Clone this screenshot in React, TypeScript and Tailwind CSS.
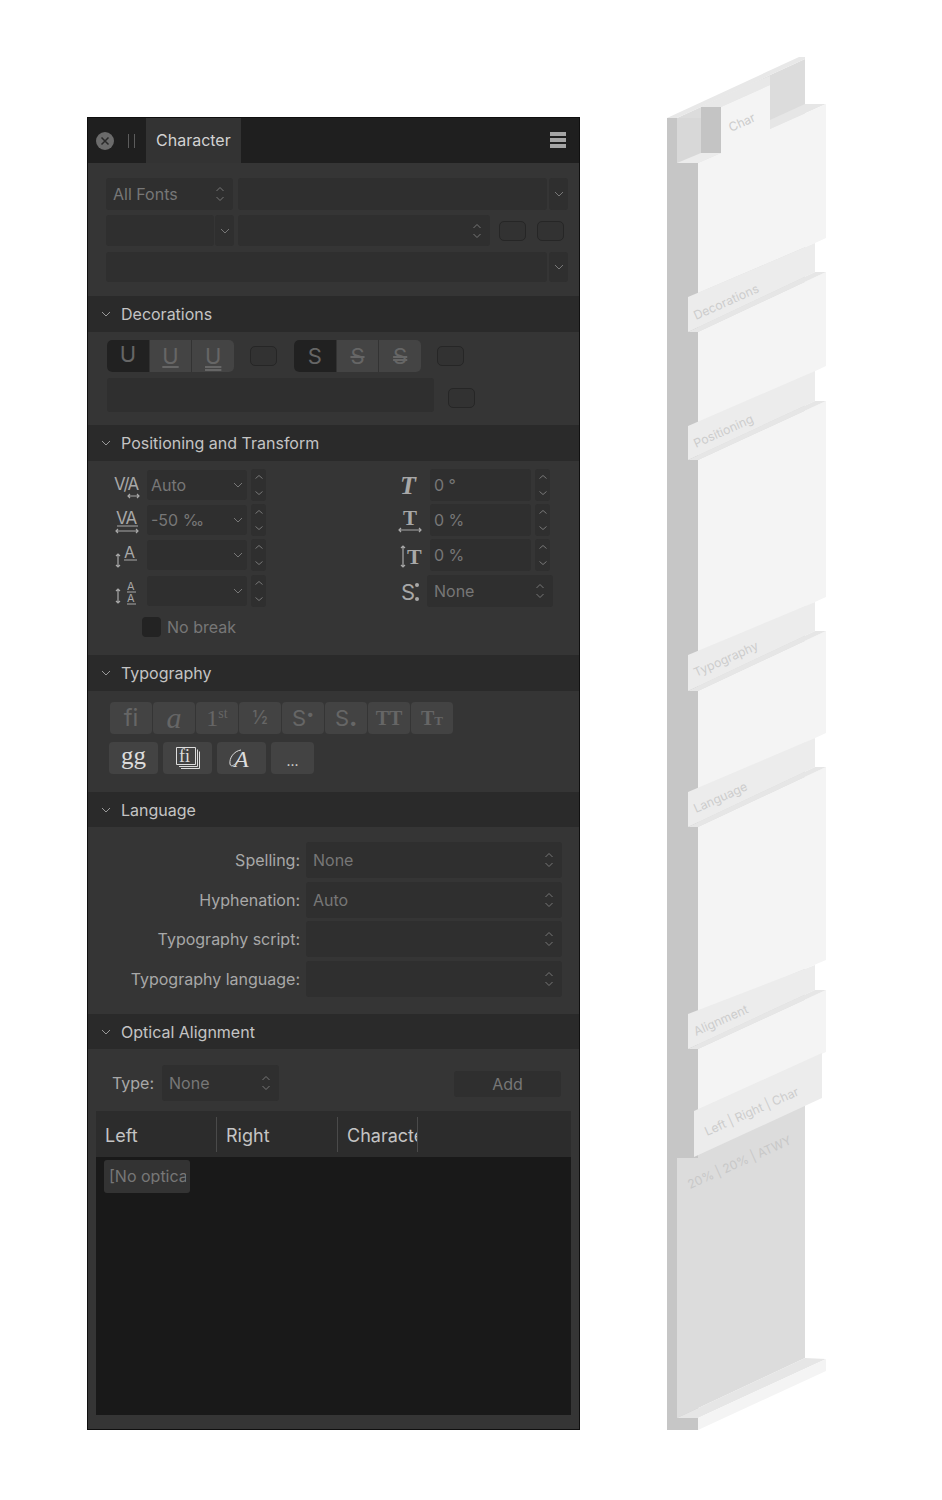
import type { ReactNode } from "react";

const Chevron = ({ className = "" }: { className?: string }) => (
  <svg viewBox="0 0 10 6" aria-hidden="true" className={`h-[6px] w-[10px] ${className}`}>
    <path d="M1 1l4 4 4-4" fill="none" stroke="currentColor" strokeWidth="1" />
  </svg>
);

const UpDown = () => (
  <svg viewBox="0 0 10 16" aria-hidden="true" className="h-[16px] w-[10px] text-[#777]">
    <path d="M1.5 5L5 1.5 8.5 5M1.5 11L5 14.5 8.5 11" fill="none" stroke="currentColor" strokeWidth="1" />
  </svg>
);

const Field = ({ className = "", children }: { className?: string; children?: ReactNode }) => (
  <div className={`flex items-center rounded-[3px] bg-[#2f2f2f] text-[#777] ${className}`}>{children}</div>
);

const Check = ({ className = "" }: { className?: string }) => (
  <div className={`h-[20px] w-[27px] rounded-[5px] border border-[#262626] bg-[#323232] ${className}`} />
);

const Select = ({ className = "", label }: { className?: string; label?: string }) => (
  <Field className={`justify-between pl-[7px] pr-[8px] ${className}`}>
    <span>{label}</span>
    <UpDown />
  </Field>
);

const ChevBox = ({ className = "" }: { className?: string }) => (
  <Field className={`justify-center ${className}`}>
    <Chevron className="text-[#777]" />
  </Field>
);

const Stepper = () => (
  <Field className="ml-[4px] h-[32px] w-[15px] justify-center">
    <svg viewBox="0 0 10 22" aria-hidden="true" className="h-[22px] w-[10px] text-[#777]">
      <path d="M1.500 4.500L5 1.500l3.500 3M1.500 17.500L5 20.500l3.500-3" fill="none" stroke="currentColor" strokeWidth="1" />
    </svg>
  </Field>
);

const Header = ({ title, className = "h-[36px]" }: { title: string; className?: string }) => (
  <div className={`flex items-center bg-[#2a2a2a] text-[#c4c4c4] ${className}`}>
    <Chevron className="ml-[13px] mr-[10px] text-[#999]" />
    <span>{title}</span>
  </div>
);

const NumRow = ({ icon, value }: { icon: ReactNode; value?: string }) => (
  <div className="flex h-[31px] items-center">
    <div className="w-[35px]">{icon}</div>
    <Field className="h-[30px] w-[100px]">
      <span className="w-[81px] pl-[4px]">{value}</span>
      <Chevron className="ml-[5px] text-[#777]" />
    </Field>
    <Stepper />
  </div>
);

const RightRow = ({ icon, value }: { icon: ReactNode; value: string }) => (
  <div className="flex h-[31px] items-center">
    <div className="w-[32px]">{icon}</div>
    <Field className="h-[32px] w-[101px] pl-[4px]">{value}</Field>
    <Stepper />
  </div>
);

const Glyph = ({ children }: { children: ReactNode }) => (
  <svg viewBox="0 0 30 32" aria-hidden="true" className="h-[32px] w-[30px] text-[#a8a8a8]">
    {children}
  </svg>
);

const Arrow = ({ d }: { d: string }) => <path d={d} fill="none" stroke="currentColor" strokeWidth="1.2" />;

const TypoBtn = ({ children }: { children: ReactNode }) => (
  <div className="flex h-[32px] w-[42px] items-center justify-center rounded-[4px] bg-[#434343] text-[#666]">
    {children}
  </div>
);

const LangRow = ({ label, value }: { label: string; value?: string }) => (
  <div className="flex h-[36px] items-center">
    <span className="w-[212px] text-right text-[#a8a8a8]">{label}</span>
    <Select className="ml-[6px] h-[36px] w-[256px]" label={value} />
  </div>
);

const Panel = () => (
  <div className="mt-[67px] h-[1313px] w-[493px] shrink-0 border border-[#0f0f0f] bg-[#353535] text-[16px] leading-none">
    <div className="flex h-[45px] items-stretch bg-[#1f1f1f]">
      <div className="ml-[8px] flex h-full items-center">
        <svg viewBox="0 0 18 18" aria-hidden="true" className="h-[18px] w-[18px]">
          <circle cx="9" cy="9" r="9" fill="#6b6b6b" />
          <path d="M5.500 5.500l7 7M12.500 5.500l-7 7" stroke="#2a2a2a" strokeWidth="1.500" />
        </svg>
        <div className="ml-[14px] h-[14px] w-[7px] border-x border-[#5c5c5c]" />
      </div>
      <div className="ml-[11px] flex w-[95px] items-center bg-[#333] pb-[2px] pl-[10px] text-[#d2d2d2]">Character</div>
      <div className="ml-auto mr-[13px] flex flex-col justify-center gap-[2px] pb-[2px]">
        <div className="h-[4px] w-[16px] bg-[#a5a5a5]" />
        <div className="h-[4px] w-[16px] bg-[#a5a5a5]" />
        <div className="h-[4px] w-[16px] bg-[#a5a5a5]" />
      </div>
    </div>

    <div className="h-[133px] pl-[18px] pt-[15px]">
      <div className="flex h-[32px] gap-[2px]">
        <Select className="mr-[3px] w-[127px]" label="All Fonts" />
        <Field className="w-[309px]" />
        <ChevBox className="w-[19px]" />
      </div>
      <div className="mt-[5px] flex h-[31px] items-center">
        <Field className="h-full w-[108px]" />
        <ChevBox className="ml-[1px] h-full w-[19px]" />
        <Select className="ml-[4px] h-full w-[252px]" />
        <Check className="ml-[9px]" />
        <Check className="ml-[11px]" />
      </div>
      <div className="mt-[6px] flex h-[30px] gap-[2px]">
        <Field className="w-[441px]" />
        <ChevBox className="w-[19px]" />
      </div>
    </div>

    <Header title="Decorations" />
    <div className="h-[93px] pl-[19px] pt-[8px]">
      <div className="flex h-[32px] items-center">
        <div className="flex h-full w-[127px] overflow-hidden rounded-[5px] bg-[#444] text-[22px] text-[#666]">
          <div className="flex flex-1 items-center justify-center bg-[#212121] pb-[5px]">U</div>
          <div className="flex flex-1 items-center justify-center border-x border-[#333] underline underline-offset-2">U</div>
          <div className="flex flex-1 items-center justify-center underline decoration-double underline-offset-2">U</div>
        </div>
        <Check className="ml-[16px]" />
        <div className="ml-[17px] flex h-full w-[127px] overflow-hidden rounded-[5px] bg-[#444] text-[22px] text-[#666]">
          <div className="flex flex-1 items-center justify-center bg-[#212121]">S</div>
          <div className="flex flex-1 items-center justify-center border-x border-[#333] line-through">S</div>
          <div className="flex flex-1 items-center justify-center line-through decoration-double">S</div>
        </div>
        <Check className="ml-[16px]" />
      </div>
      <div className="mt-[6px] flex h-[34px] items-center">
        <Field className="h-full w-[327px]" />
        <Check className="ml-[14px] mt-[6px]" />
      </div>
    </div>

    <Header title="Positioning and Transform" />
    <div className="flex h-[194px] pt-[8px]">
      <div className="ml-[24px] w-[286px]">
        <div className="flex flex-col gap-[4px]">
          <NumRow
            value="Auto"
            icon={
              <Glyph>
                <text x="2" y="21" fontSize="17" letterSpacing="-1.500" fill="currentColor">V/A</text>
                <Arrow d="M16 27h11M18 25l-2 2 2 2M25 25l2 2-2 2" />
              </Glyph>
            }
          />
          <NumRow
            value="-50 ‰"
            icon={
              <Glyph>
                <text x="4" y="20" fontSize="17" letterSpacing="-1" fill="currentColor">VA</text>
                <Arrow d="M5 22h21M4 27h22M6 25l-2 2 2 2M24 25l2 2-2 2" />
              </Glyph>
            }
          />
          <NumRow
            icon={
              <Glyph>
                <text x="12" y="19" fontSize="16" fill="currentColor">A</text>
                <Arrow d="M12 21h13M6 15v13M4 17l2-2 2 2M4 26l2 2 2-2" />
              </Glyph>
            }
          />
          <div className="mt-[1px]">
            <NumRow
              icon={
                <Glyph>
                  <text x="15" y="15" fontSize="11" fill="currentColor">A</text>
                  <text x="15" y="27" fontSize="11" fill="currentColor">A</text>
                  <Arrow d="M15 17h9M15 29h9M6 14v14M4 16l2-2 2 2M4 26l2 2 2-2" />
                </Glyph>
              }
            />
          </div>
        </div>
        <div className="ml-[30px] mt-[11px] flex h-[20px] items-center">
          <div className="h-[20px] w-[19px] rounded-[4px] bg-[#232323]" />
          <span className="ml-[6px] text-[#777]">No break</span>
        </div>
      </div>

      <div className="flex flex-col gap-[4px]">
        <RightRow
          value="0 °"
          icon={
            <Glyph>
              <text x="2" y="25" fontSize="26" fontStyle="italic" fontWeight="700" fontFamily="Liberation Serif" fill="currentColor">T</text>
            </Glyph>
          }
        />
        <RightRow
          value="0 %"
          icon={
            <Glyph>
              <text x="5" y="21" fontSize="21" fontFamily="Liberation Serif" fontWeight="700" fill="currentColor">T</text>
              <Arrow d="M1 26h22M3 24l-2 2 2 2M21 24l2 2-2 2" />
            </Glyph>
          }
        />
        <RightRow
          value="0 %"
          icon={
            <Glyph>
              <text x="9" y="25" fontSize="22" fontFamily="Liberation Serif" fontWeight="700" fill="currentColor">T</text>
              <Arrow d="M5 7v21M3 9l2-2 2 2M3 26l2 2 2-2" />
            </Glyph>
          }
        />
        <div className="mt-[1px] flex h-[32px] items-center">
          <div className="w-[29px]">
            <Glyph>
              <text x="3" y="25" fontSize="22" fill="currentColor">S</text>
              <circle cx="19" cy="10" r="2" fill="currentColor" />
              <circle cx="19" cy="24" r="2" fill="currentColor" />
            </Glyph>
          </div>
          <Select className="h-[32px] w-[126px]" label="None" />
        </div>
      </div>
    </div>

    <Header title="Typography" />
    <div className="h-[101px] pt-[11px]">
      <div className="flex h-[32px] gap-[1px] pl-[22px]">
        <TypoBtn><span className="text-[24px]">fi</span></TypoBtn>
        <TypoBtn><span className="font-['Liberation_Serif',serif] text-[30px] italic">a</span></TypoBtn>
        <TypoBtn>
          <span className="font-['Liberation_Serif',serif] text-[24px]">1</span>
          <span className="mb-[8px] font-['Liberation_Serif',serif] text-[14px]">st</span>
        </TypoBtn>
        <TypoBtn><span className="text-[18px]">½</span></TypoBtn>
        <TypoBtn><span className="text-[22px]">S</span><span className="mb-[8px] text-[14px]">•</span></TypoBtn>
        <TypoBtn><span className="text-[22px]">S</span><span className="mt-[10px] text-[14px]">•</span></TypoBtn>
        <TypoBtn><span className="font-['Liberation_Serif',serif] text-[20px] font-bold">TT</span></TypoBtn>
        <TypoBtn>
          <span className="font-['Liberation_Serif',serif] text-[20px] font-bold">T</span>
          <span className="mt-[4px] font-['Liberation_Serif',serif] text-[13px] font-bold">T</span>
        </TypoBtn>
      </div>
      <div className="mt-[8px] flex h-[32px] gap-[5px] pl-[21px] text-[#dcdcdc]">
        <div className="flex h-full w-[49px] items-center justify-center rounded-[4px] bg-[#434343] pb-[5px] font-['Liberation_Serif',serif] text-[25px]">gg</div>
        <div className="flex h-full w-[49px] items-center justify-center rounded-[4px] bg-[#434343]">
          <svg viewBox="0 0 24 24" aria-hidden="true" className="h-[24px] w-[24px]">
            <path d="M.5 1.500h19v17H.5zM21.500 3.500v17H3M23.500 5.500v17H5" fill="none" stroke="currentColor" strokeWidth="1" />
            <text x="3" y="16" fontSize="18" fontFamily="Liberation Serif" fill="currentColor">fi</text>
          </svg>
        </div>
        <div className="flex h-full w-[49px] items-center justify-center rounded-[4px] bg-[#434343]">
          <svg viewBox="0 0 30 24" aria-hidden="true" className="h-[24px] w-[30px]">
            <path d="M14 4C7 5 2 12 3 18c1 4 5 1 9-5" fill="none" stroke="currentColor" strokeWidth="1" />
            <text x="7" y="21" fontSize="24" fontStyle="italic" fontFamily="Liberation Serif" fill="currentColor">A</text>
          </svg>
        </div>
        <div className="flex h-full w-[43px] items-center justify-center rounded-[4px] bg-[#434343] pt-[6px] text-[14px]">...</div>
      </div>
    </div>

    <Header title="Language" className="h-[35px]" />
    <div className="flex h-[187px] flex-col gap-[3.67px] pt-[15px]">
      <LangRow label="Spelling:" value="None" />
      <LangRow label="Hyphenation:" value="Auto" />
      <LangRow label="Typography script:" />
      <LangRow label="Typography language:" />
    </div>

    <Header title="Optical Alignment" className="h-[35px]" />
    <div className="flex h-[62px] items-start pl-[24px] pt-[16px]">
      <span className="mt-[10px] text-[#a8a8a8]">Type:</span>
      <Select className="ml-[8px] h-[36px] w-[117px]" label="None" />
      <Field className="ml-[175px] mt-[6px] h-[26px] w-[107px] justify-center">Add</Field>
    </div>
    <div className="mx-[8px]">
      <div className="flex h-[46px] items-center bg-[#2c2c2c] text-[18px] text-[#c4c4c4]">
        <div className="flex h-[35px] w-[121px] items-center border-r border-[#4a4a4a] pl-[9px] pt-[4px]">Left</div>
        <div className="flex h-[35px] w-[121px] items-center border-r border-[#4a4a4a] pl-[9px] pt-[4px]">Right</div>
        <div className="flex h-[35px] w-[80px] items-center overflow-hidden border-r border-[#4a4a4a] pl-[9px] pt-[4px]">Character</div>
      </div>
      <div className="h-[258px] bg-[#191919] pl-[8px] pt-[3px]">
        <div className="flex h-[33px] w-[86px] items-center rounded-[3px] bg-[#333] pb-[2px] pl-[5px] pr-[4px] text-[#777]">
          <span className="overflow-hidden whitespace-nowrap">[No optical alignment]</span>
        </div>
      </div>
    </div>
  </div>
);

const slabs = [
  { bandTop: 243, bandBottom: 272, leftTop: 297, leftBottom: 332 },
  { bandTop: 371, bandBottom: 401, leftTop: 426, leftBottom: 460 },
  { bandTop: 602, bandBottom: 631, leftTop: 655, leftBottom: 691 },
  { bandTop: 738, bandBottom: 767, leftTop: 792, leftBottom: 827 },
  { bandTop: 965, bandBottom: 990, leftTop: 1014, leftBottom: 1049 },
];

const labels = [
  { text: "Char", x: 731, y: 132, fill: "#cbcbcb" },
  { text: "Decorations", x: 696, y: 320, fill: "#cdcdcd" },
  { text: "Positioning", x: 696, y: 448, fill: "#cdcdcd" },
  { text: "Typography", x: 696, y: 677, fill: "#cdcdcd" },
  { text: "Language", x: 696, y: 813, fill: "#cdcdcd" },
  { text: "Alignment", x: 696, y: 1036, fill: "#cdcdcd" },
  { text: "Left | Right | Char", x: 707, y: 1136, fill: "#cdcdcd" },
  { text: "20% | 20% | ATWY", x: 690, y: 1189, fill: "#c8c8c8" },
];

// exploded side view of the panel, on the right of the page
const Exploded = () => (
  <svg viewBox="660 50 170 1390" aria-hidden="true" className="h-[1390px] w-[170px] shrink-0">
    <path d="M667 118h31v1312h-31z" fill="#c6c6c6" />
    <path d="M677 118L805 59v1299l-128 60z" fill="#dcdcdc" />
    <path d="M677 163h21v995h-21z" fill="#c6c6c6" />
    <path d="M667 118L799 57h6v2L677 118z" fill="#e8e8e8" />
    <path d="M677 118L752 83l18-7v9l-49 22h-20z" fill="#e8e8e8" />
    <path d="M677 118h24v35l-3 10h-21z" fill="#d8d8d8" />
    <path d="M701 107h20v46h-20z" fill="#c4c4c4" />
    <path d="M677 163l24-10h20l-23 10z" fill="#ececec" />
    <path d="M770 120l35-16h21l-56 25z" fill="#e6e6e6" />
    <path d="M698 163l23-10v-46l49-22v44l56-25v134l-11 5-117 50z" fill="#f4f4f4" />
    <path d="M698 332L826 272v94l-128 60z" fill="#f4f4f4" />
    <path d="M698 460L826 401v196l-128 58z" fill="#f4f4f4" />
    <path d="M698 691L826 631v102l-128 59z" fill="#f4f4f4" />
    <path d="M698 827L826 767v193l-128 54z" fill="#f4f4f4" />
    <path d="M698 1049L826 990v62l-128 58z" fill="#f4f4f4" />
    {slabs.map((s) => (
      <g key={s.bandTop}>
        <path d={`M688 ${s.leftTop}L815 ${s.bandTop}V${s.bandBottom}L688 ${s.leftBottom}z`} fill="#ececec" />
        <path d={`M688 ${s.leftBottom}L815 ${s.bandBottom}h11L698 ${s.leftBottom}z`} fill="#e6e6e6" />
      </g>
    ))}
    <path d="M694 1111L822 1053v45L694 1157z" fill="#ececec" />
    <path d="M677 1418L805 1358l21 1-128 59z" fill="#e6e6e6" />
    <path d="M698 1418L826 1359v12L698 1430z" fill="#f4f4f4" />
    <path d="M667 1418h31v12h-31z" fill="#c6c6c6" />
    {labels.map((l) => (
      <text
        key={l.text}
        x={l.x}
        y={l.y}
        fontSize="12.250"
        fontFamily="Inter"
        fill={l.fill}
        transform={`rotate(-24 ${l.x} ${l.y})`}
      >
        {l.text}
      </text>
    ))}
  </svg>
);

export default function App() {
  return (
    <div className="flex h-[1500px] w-[942px] items-start bg-white pl-[87px] pt-[50px] font-['Inter',sans-serif]">
      <Panel />
      <div className="ml-[80px]">
        <Exploded />
      </div>
    </div>
  );
}
